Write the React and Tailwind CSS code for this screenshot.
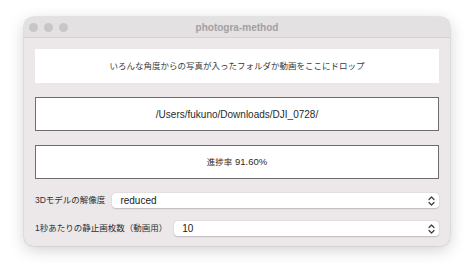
// App.jsx — photogra-method window
const FONT = { fontFamily: '"Liberation Sans", "Noto Sans CJK JP", sans-serif' };

function UpDown() {
    return (
        <svg width="7" height="10" viewBox="0 0 7 10" fill="none" stroke="#3a3a3a" strokeWidth="1.2" strokeLinecap="round" strokeLinejoin="round">
            <path d="M1 3.5 L3.5 1 L6 3.5" />
            <path d="M1 6.5 L3.5 9 L6 6.5" />
        </svg>
    );
}

function SelectRow({ label, value }) {
    return (
        <div className="flex items-center h-[15px]">
            <span className="text-[8.5px] text-[#2e2e2e] pr-[7px] whitespace-nowrap">{label}</span>
            <div className="flex-1 h-[15px] flex items-center justify-between rounded-[4px] bg-white pl-[8px] pr-[4px] shadow-[0_0.5px_1.5px_rgba(0,0,0,0.2)]">
                <span className="text-[10px] text-[#222]">{value}</span>
                <UpDown />
            </div>
        </div>
    );
}

export default function App() {
    return (
        <div className="w-[474px] h-[276px] bg-white overflow-hidden pt-[17px] pl-[24px]" style={FONT}>
            <div className="w-[426px] h-[229px] rounded-[9px] bg-[#ece8e9] overflow-hidden shadow-[0_4px_16px_rgba(0,0,0,0.18),0_0_0_0.5px_rgba(0,0,0,0.12)] flex flex-col">
                {/* title bar */}
                <div className="h-[21px] shrink-0 bg-[#e4e1e2] border-b border-[#d4d1d2] flex items-center relative">
                    <div className="flex gap-[6px] pl-[5px]">
                        <span className="w-[9px] h-[9px] rounded-full bg-[#c9c6c7]" />
                        <span className="w-[9px] h-[9px] rounded-full bg-[#c9c6c7]" />
                        <span className="w-[9px] h-[9px] rounded-full bg-[#c9c6c7]" />
                    </div>
                    <span className="absolute inset-x-0 text-center text-[10px] font-bold text-[#a3a0a1]">photogra-method</span>
                </div>

                {/* content */}
                <div className="flex flex-col px-[11px] pt-[11px]">
                    <div className="h-[34px] bg-white flex items-center justify-center text-[8.5px] text-[#3a3a3a]">
                        いろんな角度からの写真が入ったフォルダか動画をここにドロップ
                    </div>
                    <div className="mt-[14px] h-[34px] bg-white border border-[#6e6c6d] flex items-center justify-center text-[10px] text-[#2a2a2a]">
                        /Users/fukuno/Downloads/DJI_0728/
                    </div>
                    <div className="mt-[14px] h-[34px] bg-white border border-[#6e6c6d] flex items-center justify-center text-[9.5px] text-[#2a2a2a]">
                        <span className="text-[8.5px]">進捗率</span>&nbsp;91.60%
                    </div>
                    <div className="mt-[14px]">
                        <SelectRow label="3Dモデルの解像度" value="reduced" />
                    </div>
                    <div className="mt-[13px]">
                        <SelectRow label="1秒あたりの静止画枚数（動画用）" value="10" />
                    </div>
                </div>
            </div>
        </div>
    );
}
